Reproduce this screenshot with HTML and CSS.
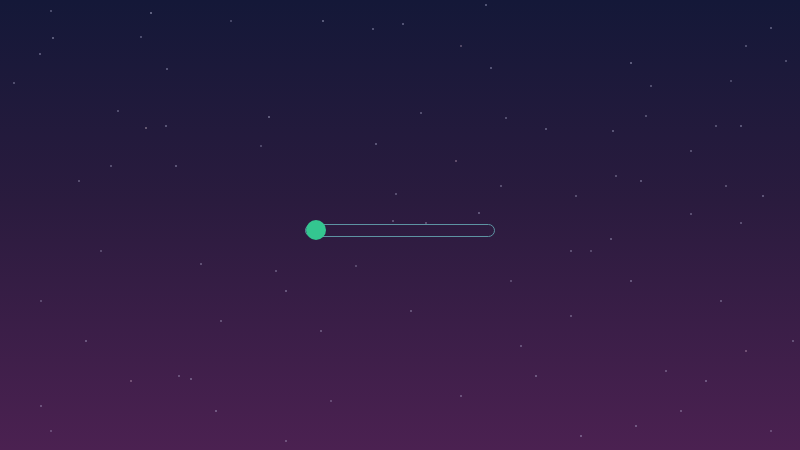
FILE: index.html
```html
<!DOCTYPE html>
<html lang="en">
<head>
    <meta charset="UTF-8">
    <meta name="viewport" content="width=device-width, initial-scale=1.0">
    <title>Night Slider</title>
    <link rel="stylesheet" href="styles.css">
</head>
<body>
    <div class="sky">
        <div class="stars"></div>

        <div class="range">
            <input type="range" class="range-input" min="0" max="100" value="0" aria-label="Value">
        </div>
    </div>
</body>
</html>
```

FILE: styles.css
```css
:root {
    --sky-top: #141838;
    --sky-mid: #2a1b3e;
    --sky-bottom: #4b2151;
    --mint: #34c690;
    --rail: #5d93a2;
}

* {
    margin: 0;
    padding: 0;
    box-sizing: border-box;
}

html, body {
    height: 100%;
}

body {
    font-family: 'Open Sans', sans-serif;
    overflow: hidden;
}

.sky {
    position: relative;
    height: 100%;
    background: linear-gradient(to bottom, var(--sky-top) 0%, var(--sky-mid) 45%, var(--sky-bottom) 100%);
    display: flex;
    align-items: center;
    justify-content: center;
    padding-top: 10px;
}

/* scattered star dots, one shadow per star */
.stars {
    position: absolute;
    top: 0;
    left: 0;
    width: 2px;
    height: 2px;
    border-radius: 50%;
    background: transparent;
    box-shadow:
        150px 12px rgba(200,200,230,0.55), 322px 20px rgba(200,200,230,0.5), 402px 23px rgba(200,200,230,0.45),
        485px 4px rgba(200,200,230,0.45), 52px 37px rgba(200,200,230,0.5), 140px 36px rgba(200,200,230,0.4),
        372px 28px rgba(200,200,230,0.45), 460px 45px rgba(210,180,200,0.4), 490px 67px rgba(200,200,230,0.45),
        630px 62px rgba(200,200,230,0.5), 770px 27px rgba(200,200,230,0.45), 745px 45px rgba(200,200,230,0.4),
        650px 85px rgba(200,200,230,0.4), 730px 80px rgba(200,200,230,0.35), 785px 60px rgba(200,200,230,0.4),
        50px 10px rgba(200,200,230,0.4), 13px 82px rgba(200,200,230,0.4), 39px 53px rgba(200,200,230,0.45),
        117px 110px rgba(200,200,230,0.4), 166px 68px rgba(200,200,230,0.45),
        268px 116px rgba(200,200,230,0.5), 145px 127px rgba(210,190,200,0.5), 165px 125px rgba(200,200,230,0.45),
        375px 143px rgba(200,200,230,0.45), 420px 112px rgba(200,200,230,0.4), 505px 117px rgba(200,200,230,0.4),
        545px 128px rgba(200,200,230,0.45), 612px 130px rgba(200,200,230,0.45), 645px 115px rgba(200,200,230,0.4),
        715px 125px rgba(200,200,230,0.4), 740px 125px rgba(200,200,230,0.45), 110px 165px rgba(200,200,230,0.4),
        175px 165px rgba(200,200,230,0.45), 78px 180px rgba(200,200,230,0.4), 455px 160px rgba(210,180,200,0.45),
        500px 185px rgba(200,200,230,0.4), 615px 175px rgba(200,200,230,0.4), 640px 180px rgba(200,200,230,0.45),
        690px 150px rgba(200,200,230,0.4), 725px 185px rgba(200,200,230,0.4), 762px 195px rgba(200,200,230,0.45),
        575px 195px rgba(200,200,230,0.4), 395px 193px rgba(200,200,230,0.4), 478px 212px rgba(200,200,230,0.45),
        425px 222px rgba(200,200,230,0.4), 392px 220px rgba(200,200,230,0.4), 690px 213px rgba(200,200,230,0.4),
        740px 222px rgba(200,200,230,0.4), 610px 238px rgba(200,200,230,0.45), 200px 263px rgba(200,200,230,0.4),
        285px 290px rgba(200,200,230,0.45), 275px 270px rgba(200,200,230,0.4), 570px 250px rgba(200,200,230,0.4),
        630px 280px rgba(200,200,230,0.45), 320px 330px rgba(200,200,230,0.4), 410px 310px rgba(200,200,230,0.4),
        220px 320px rgba(200,200,230,0.4), 85px 340px rgba(200,200,230,0.45), 130px 380px rgba(210,180,200,0.45),
        190px 378px rgba(200,200,230,0.45), 178px 375px rgba(200,200,230,0.4), 215px 410px rgba(200,200,230,0.45),
        570px 315px rgba(200,200,230,0.4), 520px 345px rgba(200,200,230,0.4), 535px 375px rgba(200,200,230,0.45),
        665px 370px rgba(200,200,230,0.4), 705px 380px rgba(200,200,230,0.45), 745px 350px rgba(210,180,200,0.45),
        792px 340px rgba(200,200,230,0.4), 635px 425px rgba(200,200,230,0.45), 285px 440px rgba(200,200,230,0.4),
        580px 435px rgba(200,200,230,0.45), 40px 405px rgba(200,200,230,0.4), 50px 430px rgba(200,200,230,0.35),
        590px 250px rgba(200,200,230,0.35), 720px 300px rgba(200,200,230,0.4), 40px 300px rgba(200,200,230,0.35),
        230px 20px rgba(200,200,230,0.35), 260px 145px rgba(200,200,230,0.35), 330px 400px rgba(200,200,230,0.35),
        460px 395px rgba(200,200,230,0.4), 680px 410px rgba(200,200,230,0.4), 770px 430px rgba(200,200,230,0.35),
        100px 250px rgba(200,200,230,0.35), 355px 265px rgba(200,200,230,0.35), 510px 280px rgba(200,200,230,0.35);
}

.range {
    position: relative;
    width: 190px;
}

.range-input {
    -webkit-appearance: none;
    appearance: none;
    display: block;
    width: 100%;
    height: 20px;
    background: transparent;
    outline: none;
}

.range-input::-webkit-slider-runnable-track {
    height: 13px;
    border: 1px solid var(--rail);
    border-radius: 7px;
    background: transparent;
}

.range-input::-webkit-slider-thumb {
    -webkit-appearance: none;
    appearance: none;
    width: 20px;
    height: 20px;
    margin-top: -4.5px;
    border: none;
    border-radius: 50%;
    background: var(--mint);
}
```
